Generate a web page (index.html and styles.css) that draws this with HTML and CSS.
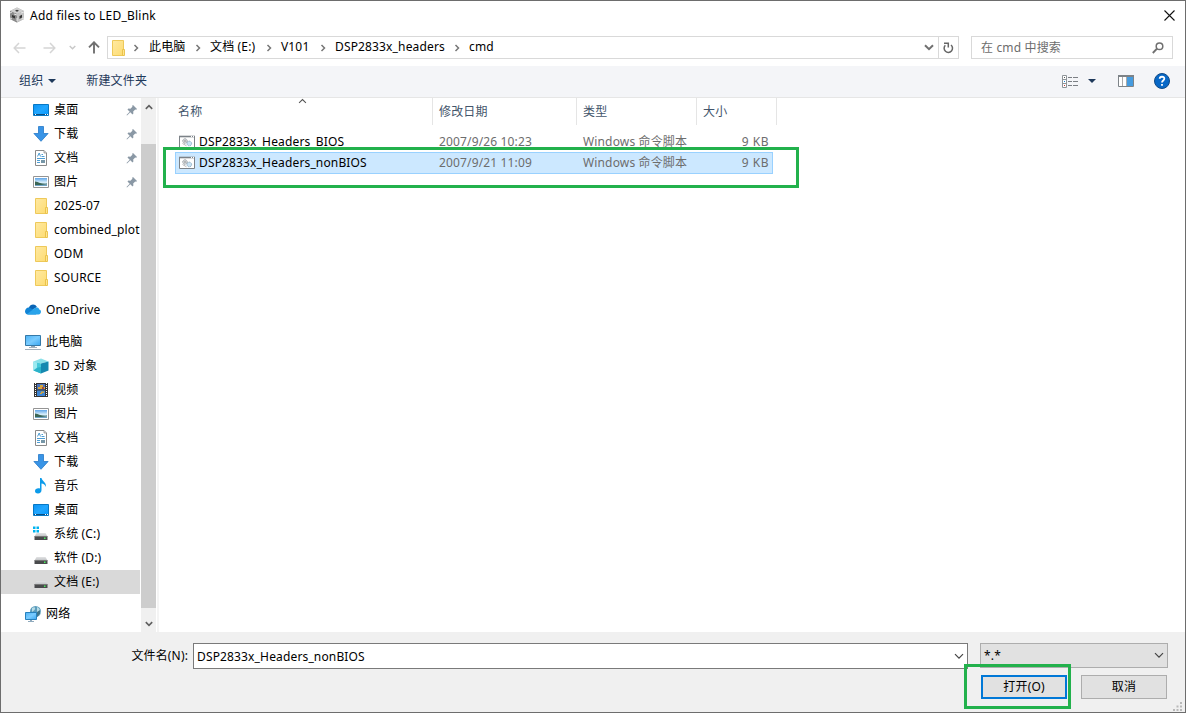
FILE: index.html
```html
<!DOCTYPE html>
<html lang="zh-CN">
<head>
<meta charset="utf-8">
<title>Add files to LED_Blink</title>
<link rel="stylesheet" href="styles.css">
</head>
<body>
<svg class="defs" width="0" height="0">
  <defs>
    <linearGradient id="gFolder" x1="0" y1="0" x2="1" y2="1"><stop offset="0" stop-color="#ffe9a2"/><stop offset="1" stop-color="#fddc72"/></linearGradient>
    <linearGradient id="gDesk" x1="0" y1="0" x2="1" y2="1"><stop offset="0" stop-color="#0a93f5"/><stop offset=".5" stop-color="#22a7ff"/><stop offset="1" stop-color="#0796fb"/></linearGradient>
    <linearGradient id="gScreen" x1="0" y1="0" x2="1" y2="1"><stop offset="0" stop-color="#4db2f4"/><stop offset=".5" stop-color="#7accff"/><stop offset="1" stop-color="#39a6f0"/></linearGradient>
    <linearGradient id="gSky" x1="0" y1="0" x2="0" y2="1"><stop offset="0" stop-color="#5fa5e8"/><stop offset=".55" stop-color="#d9effb"/><stop offset="1" stop-color="#5f98bd"/></linearGradient>
    <linearGradient id="gDrive" x1="0" y1="0" x2="0" y2="1"><stop offset="0" stop-color="#e2e3e4"/><stop offset="1" stop-color="#bfc1c4"/></linearGradient>
  </defs>
  <symbol id="folder" viewBox="0 0 16 16"><path d="M2.500.5h11v15h-11z" fill="url(#gFolder)" stroke="#eec95a"/><path d="M12.500 9.500h2v6h-2z" fill="#ffe58f" stroke="#e9bf45" stroke-width=".9"/></symbol>
  <symbol id="desktop" viewBox="0 0 16 16"><path d="M.5 2.500h15v11H.5z" fill="url(#gDesk)" stroke="#0878c4"/><path d="M1 12.500h14" stroke="#0b4f83"/><path d="M2 12.500h1m9 0h1m1 0h1" stroke="#fff"/></symbol>
  <symbol id="download" viewBox="0 0 16 16"><path d="M5.500.5h5v7h4.600L8 15.300.9 7.500h4.600z" fill="#3994e6" stroke="#2479c8" stroke-width=".8"/></symbol>
  <symbol id="doc" viewBox="0 0 16 16"><path d="M2.500.5h8.500l2.500 2.500v12.500h-11z" fill="#fff" stroke="#8a8a8a"/><path d="M11 .5V3h2.500" fill="#ddd" stroke="#8a8a8a" stroke-width=".7"/><path d="M4.500 6.500 6.200 3l1.300 3.500M8.500 4.500H10M8.500 6.500h3M4 8.500h8M4 10.500h3M4 12.500h3" stroke="#3a92ce" stroke-width=".9" fill="none"/><path d="M8 10h4v3H8z" fill="#7797a8"/></symbol>
  <symbol id="picture" viewBox="0 0 16 16"><path d="M.5 2.500h15v11H.5z" fill="#fff" stroke="#949494"/><path d="M2 4h12v8H2z" fill="url(#gSky)"/><path d="M2 7.500c2 0 3 1 5 1.500s4 1 7 .5v.7L8 11H2z" fill="#3b6655"/></symbol>
  <symbol id="pin" viewBox="0 0 12 12"><path d="M7 1l4 4-.8.8-1-.2-2 2 .2 2-.9.9-2.200-2.200L1 11.500l-.5-.5 3.200-3.300-2.200-2.200.9-.9 2 .2 2-2-.2-1z" fill="#8a98a5"/></symbol>
  <symbol id="cloud" viewBox="0 0 16 16"><path d="M4 5.500C5 2 10 1 12 5l-5 3-5 1z" fill="#0a64b5"/><path d="M0 9.500C0 7 2 5 4.500 5.500L12 10l-1 2.500H3C1 12.500 0 11 0 9.500z" fill="#1184d6"/><path d="M8 7.500C9.500 5 14 4.500 14.200 7.500 16.800 8 16.500 12.500 13.500 12.500H3l-1-.6z" fill="#29a3ea"/></symbol>
  <symbol id="pc" viewBox="0 0 16 16"><path d="M.5 1.500h15v10H.5z" fill="url(#gScreen)" stroke="#3579a8"/><path d="M6 12h4v1H6z" fill="#8fa5b5"/><path d="M4 13.500h8M0 15.500h16" stroke="#8b9dab" stroke-width=".8"/></symbol>
  <symbol id="cube" viewBox="0 0 16 16"><path d="M.5 3.500 8 .5l7.500 3L8 5.500z" fill="#8be1e9"/><path d="M.5 3.500 8 5.500v10L.5 12.500z" fill="#45c9da"/><path d="M.5 3.500 4 4.400V9.500L.5 12.500z" fill="#9ceaf0"/><path d="M8 5.500l7.500-2v9L8 15.500z" fill="#1689b0"/><path d="M.5 12.500 5 9.500l3-.5v6.500z" fill="#2cb2c9"/></symbol>
  <symbol id="film" viewBox="0 0 16 16"><path d="M1 1h14v14H1z" fill="#343434"/><path d="M2.500 1v14M13.500 1v14" stroke="#fff" stroke-dasharray="1 1"/><path d="M4 2h8v5.500H4z" fill="#4b75bc"/><path d="M4 8.500h8V14H4z" fill="#3e84d2"/><path d="M5 5h2V3h3v2h2v2H5zM7 11h1V9.500h3V11H9v1H7z" fill="#d3a53d"/><path d="M9 5h2v2H9z" fill="#a64943"/></symbol>
  <symbol id="music" viewBox="0 0 16 16"><path d="M7 0h1.500c.3 3 5.500 4.500 4.200 9-.7-2-2-3.300-4.200-3.400V12c0 2-1.300 3.500-3.500 3.500S2 14.500 2 13c0-2 2.500-3.200 5-2.400z" fill="#0c9bea"/></symbol>
  <symbol id="drive" viewBox="0 0 16 16"><path d="M3.500 7h9l2 3.500h-13z" fill="url(#gDrive)"/><path d="M1.500 10h13v4h-13z" fill="#4a4b4d"/><path d="M2 10.500h12" stroke="#777"/><path d="M11 11.500h1.500V13H11z" fill="#47f05c"/></symbol>
  <symbol id="sysdrive" viewBox="0 0 16 16"><use href="#drive" width="16" height="16"/><path d="M0 .5h2.500V3H0zM3.500.5H6V3H3.500zM0 4h2.500v2.500H0zM3.500 4H6v2.500H3.500z" fill="#00b4f0"/></symbol>
  <symbol id="network" viewBox="0 0 16 16"><circle cx="10.500" cy="5.500" r="5.500" fill="#5b9cbc"/><path d="M7 2c3-2 4 0 2.500 2L7 6zM12 1c3 1 4 5 3 8l-3-3z" fill="#b7dbe5"/><path d="M12 6l3-2v4l-3 3z" fill="#427589"/><path d="M.5 6.500h11v7H.5z" fill="url(#gScreen)" stroke="#2681bd"/><path d="M3 15.500h6M5 14.500h2" stroke="#8faabd"/></symbol>
  <symbol id="script" viewBox="0 0 16 14"><path d="M.5 1.500h15v11H.5z" fill="#fff" stroke="#7c8288"/><path d="M0 1.500h16" stroke="#7c8288" stroke-width="1.600"/><path d="M12 1.500h1m1 0h1" stroke="#fff"/><circle cx="6" cy="6" r="2.200" fill="#e2e4e6" stroke="#7f868c" stroke-dasharray="1 .6"/><circle cx="6" cy="6" r=".7" fill="#666"/><circle cx="10.300" cy="8.500" r="2.300" fill="#c9e3f3" stroke="#7fa3bd" stroke-dasharray="1 .6"/><path d="M3.500 8.500l4 2.300" stroke="#999" stroke-width=".7"/></symbol>
  <symbol id="crumb" viewBox="0 0 6 8"><path d="M1.500 1 4.500 4 1.500 7" fill="none" stroke="#777" stroke-width="1.500"/></symbol>
  <symbol id="chev" viewBox="0 0 10 7"><path d="M1 1.200 5 5.200 9 1.200" fill="none" stroke="currentColor" stroke-width="var(--w,1.200)"/></symbol>
</svg>

<div class="window">
  <header class="titlebar">
    <svg class="app-icon" width="16" height="16" viewBox="0 0 16 16"><path d="M1 4 8 .5 15 4v8l-7 3.500L1 12z" fill="#a3a3a3"/><path d="M1 4 8 .5 15 4 8 7z" fill="#d0d0d0"/><path d="M1 4l7 3v8.500L1 12z" fill="#8b8b8b"/><path d="M8 7l7-3v8l-7 3.500z" fill="#c4c4c4"/><path d="M6 3.800l2-1 2 1-2 .9zM3 8l3 1v2.500l-3-1.300zM10.500 9l2.500-1.200v2.700L10.500 12z" fill="#363636"/><path d="M1 6l2-1M5 7l3 1M1 11l2 1M8 14v-3M12 6l3-1M13 12l2-1" stroke="#e5e5e5"/></svg>
    <h1 class="title">Add files to LED_Blink</h1>
    <svg class="close" width="11" height="11" viewBox="0 0 11 11"><path d="M.5.5l10 10M10.500.5l-10 10" stroke="#111" stroke-width="1.100"/></svg>
  </header>

  <div class="nav">
    <div class="nav-buttons">
      <svg width="13" height="12" viewBox="0 0 13 12"><path d="M6 1 1.200 6 6 11M1.200 6H12.500" fill="none" stroke="#d5d5d5" stroke-width="1.500"/></svg>
      <svg width="13" height="12" viewBox="0 0 13 12"><path d="M7 1l4.800 5L7 11M11.800 6H.5" fill="none" stroke="#d5d5d5" stroke-width="1.500"/></svg>
      <svg class="recent" width="7" height="5"><use href="#chev"/></svg>
      <svg width="12" height="13" viewBox="0 0 12 13"><path d="M1 6.300 6 1.300l5 5M6 1.500V12.500" fill="none" stroke="#717171" stroke-width="1.900"/></svg>
    </div>
    <div class="address">
      <svg class="folder" width="16" height="16"><use href="#folder"/></svg>
      <svg class="sep s1" width="6" height="8"><use href="#crumb"/></svg><span class="crumb c1">此电脑</span>
      <svg class="sep" width="6" height="8"><use href="#crumb"/></svg><span class="crumb c2">文档 (E:)</span>
      <svg class="sep" width="6" height="8"><use href="#crumb"/></svg><span class="crumb c3">V101</span>
      <svg class="sep" width="6" height="8"><use href="#crumb"/></svg><span class="crumb c4">DSP2833x_headers</span>
      <svg class="sep" width="6" height="8"><use href="#crumb"/></svg><span class="crumb">cmd</span>
      <svg class="drop bold" width="10" height="7"><use href="#chev"/></svg>
      <span class="refresh"><svg width="11" height="12" viewBox="0 0 11 12"><path d="M2.300 3.300A4.200 4.200 0 1 0 8 3" fill="none" stroke="#666" stroke-width="1.500"/><path d="M1 1.200h4.300V5.500" fill="none" stroke="#666" stroke-width="1.500"/></svg></span>
    </div>
    <div class="search"><span>在 cmd 中搜索</span><svg width="12" height="12" viewBox="0 0 12 12"><circle cx="7.500" cy="4.300" r="3.300" fill="none" stroke="#707070" stroke-width="1.500"/><path d="M5 6.700.8 11" stroke="#707070" stroke-width="1.900"/></svg></div>
  </div>

  <div class="toolbar">
    <span>组织</span><i class="caret"></i><span class="newfolder">新建文件夹</span>
    <svg class="view" width="17" height="13" viewBox="0 0 17 13"><path d="M.5.5h4v12h-4zM.5 4.500h4M.5 8.500h4" fill="#fff" stroke="#8e9499"/><path d="M2 2h1v1H2z" fill="#555"/><path d="M2 6h1v1H2z" fill="#1787dc"/><path d="M2 10h1v1H2z" fill="#c33"/><path d="M6 2.500h4m1 0h5M6 6.500h4m1 0h5M6 10.500h4m1 0h5" stroke="#7b7f84"/></svg>
    <i class="caret"></i>
    <svg class="pane" width="16" height="12" viewBox="0 0 16 12"><path d="M.5.5h15v11H.5z" fill="#fff" stroke="#7d8388"/><path d="M0 1h16" stroke="#7d8388" stroke-width="2"/><path d="M9 2h6v9H9z" fill="#459bdf"/><path d="M4.500 2v9M8.500 2v9" stroke="#aaa"/></svg>
    <svg class="help" width="16" height="16" viewBox="0 0 16 16"><circle cx="8" cy="8" r="7.500" fill="#0868c7" stroke="#114a86"/><path d="M5.700 5.700C5.900 3 10.500 3.200 10.300 5.800 10.200 7.500 8 7.500 8 9.500M8 11v1.800" fill="none" stroke="#fff" stroke-width="1.800"/></svg>
  </div>

  <main class="body">
    <nav class="tree">
      <div class="item"><svg><use href="#desktop"/></svg><span>桌面</span><svg class="pin"><use href="#pin"/></svg></div>
      <div class="item"><svg><use href="#download"/></svg><span>下载</span><svg class="pin"><use href="#pin"/></svg></div>
      <div class="item"><svg><use href="#doc"/></svg><span>文档</span><svg class="pin"><use href="#pin"/></svg></div>
      <div class="item"><svg><use href="#picture"/></svg><span>图片</span><svg class="pin"><use href="#pin"/></svg></div>
      <div class="item"><svg><use href="#folder"/></svg><span>2025-07</span></div>
      <div class="item"><svg><use href="#folder"/></svg><span>combined_plot</span></div>
      <div class="item"><svg><use href="#folder"/></svg><span>ODM</span></div>
      <div class="item"><svg><use href="#folder"/></svg><span>SOURCE</span></div>
      <div class="item root"><svg><use href="#cloud"/></svg><span>OneDrive</span></div>
      <div class="item root"><svg><use href="#pc"/></svg><span>此电脑</span></div>
      <div class="item"><svg><use href="#cube"/></svg><span>3D 对象</span></div>
      <div class="item"><svg><use href="#film"/></svg><span>视频</span></div>
      <div class="item"><svg><use href="#picture"/></svg><span>图片</span></div>
      <div class="item"><svg><use href="#doc"/></svg><span>文档</span></div>
      <div class="item"><svg><use href="#download"/></svg><span>下载</span></div>
      <div class="item"><svg><use href="#music"/></svg><span>音乐</span></div>
      <div class="item"><svg><use href="#desktop"/></svg><span>桌面</span></div>
      <div class="item"><svg><use href="#sysdrive"/></svg><span>系统 (C:)</span></div>
      <div class="item"><svg><use href="#drive"/></svg><span>软件 (D:)</span></div>
      <div class="item active"><svg><use href="#drive"/></svg><span>文档 (E:)</span></div>
      <div class="item root"><svg><use href="#network"/></svg><span>网络</span></div>
    </nav>
    <div class="scrollbar">
      <span class="sb-btn up"><svg class="bold" width="8" height="6"><use href="#chev"/></svg></span>
      <span class="thumb"></span>
      <span class="sb-btn"><svg class="bold" width="8" height="6"><use href="#chev"/></svg></span>
    </div>
    <section class="files">
      <div class="row head"><span>名称<svg class="sort" width="9" height="6"><use href="#chev"/></svg></span><span>修改日期</span><span>类型</span><span>大小</span></div>
      <div class="row file"><span class="name"><svg width="16" height="14"><use href="#script"/></svg>DSP2833x_Headers_BIOS</span><span>2007/9/26 10:23</span><span>Windows 命令脚本</span><span class="size">9 KB</span></div>
      <div class="row file selected"><span class="name"><svg width="16" height="14"><use href="#script"/></svg>DSP2833x_Headers_nonBIOS</span><span>2007/9/21 11:09</span><span>Windows 命令脚本</span><span class="size">9 KB</span></div>
    </section>
  </main>

  <footer class="footer">
    <div class="fields">
      <label class="label">文件名(N):</label>
      <div class="combo filename"><span>DSP2833x_Headers_nonBIOS</span><svg width="10" height="7"><use href="#chev"/></svg></div>
      <div class="combo filter"><span>*.*</span><svg width="10" height="7"><use href="#chev"/></svg></div>
    </div>
    <div class="actions"><span class="btn primary">打开(O)</span><span class="btn">取消</span></div>
    <svg class="grip" width="9" height="9" viewBox="0 0 9 9"><path d="M7 0h2v2H7zM7 3.500h2v2H7zM3.500 3.500h2v2h-2zM7 7h2v2H7zM3.500 7h2v2h-2zM0 7h2v2H0z" fill="#b9b9b9"/></svg>
  </footer>
  <div class="mark mark-file"></div>
  <div class="mark mark-open"></div>
</div>
</body>
</html>
```
FILE: styles.css
```css
* { box-sizing: border-box; }
body {
  margin: 0;
  font: 12px/18px "Noto Sans", "Noto Sans CJK SC", sans-serif;
  letter-spacing: 0.15px;
  color: #000;
}
svg { display: block; flex: none; }
.defs { position: absolute; }
.window {
  position: relative;
  width: 1186px;
  height: 713px;
  display: flex;
  flex-direction: column;
  border: 1px solid #6d6d6d;
  background: #fff;
  overflow: hidden;
  white-space: nowrap;
}

.titlebar { display: flex; align-items: center; height: 29px; padding: 0 10px 0 8px; }
.title { margin: 0 0 0 5px; font-size: 12px; font-weight: 400; letter-spacing: 0.22px; }
.app-icon { margin-bottom: 1px; }
.close { margin-left: auto; }

.nav { display: flex; height: 36px; padding: 6px 12px 7px 0; }
.nav-buttons { display: flex; align-items: center; width: 106px; padding-left: 12px; gap: 17px; }
.nav-buttons .recent { color: #c8c8c8; --w: 2; margin: 0 -5px 0 -4px; }
.address { display: flex; align-items: center; width: 852px; border: 1px solid #d9d9d9; }
.address .folder { margin-left: 2px; }
.sep { margin: 0 9px 0 9px; }
.address .s1 { margin: 0 10px 0 7px; }
.crumb { line-height: 20px; margin-top: -1px; }
.c1 { width: 37px; }
.c2 { width: 47px; }
.c3 { width: 30px; }
.c4 { width: 110px; }
.bold { --w: 2; color: #606060; }
.drop { margin-left: auto; margin-right: 4px; color: #707070; }
.refresh { display: flex; align-items: center; justify-content: center; width: 20px; height: 21px; border-left: 1px solid #d9d9d9; }
.search { display: flex; align-items: center; justify-content: space-between; width: 202px; margin-left: auto; padding: 0 8px 0 9px; border: 1px solid #d9d9d9; color: #6d6d6d; }

.toolbar { display: flex; align-items: center; height: 32px; padding: 0 15px 1px 18px; background: #f4f5f8; border-bottom: 1px solid #e6e6e6; color: #1e395b; }
.caret { width: 0; height: 0; margin-left: 5px; border: 4px solid transparent; border-top-color: #1e395b; border-bottom: 0; }
.newfolder { margin-left: 30px; }
.view { margin-left: auto; margin-right: 4px; }
.pane { margin: 0 20px 0 22px; }

.body { display: flex; height: 534px; }
.tree { width: 139px; overflow: hidden; }
.item { display: flex; align-items: center; height: 24px; padding-left: 32px; }
.item > svg { width: 16px; height: 16px; margin-right: 5px; }
.item > span { width: 76px; line-height: 22px; }
.item > .pin { width: 12px; height: 12px; margin: 0 0 0 -4px; }
.item.root { margin-top: 8px; padding-left: 24px; }
.item.active { background: #d9d9d9; }
.scrollbar { display: flex; flex-direction: column; width: 18px; margin-left: 1px; background: linear-gradient(90deg, #f0f0f0 15px, #fff 15px, #fff 16px, #f4f4f4 16px); }
.sb-btn { display: flex; align-items: center; justify-content: center; width: 15px; height: 24px; padding-top: 8px; }
.sb-btn.up { height: 46px; align-items: flex-start; padding-top: 6px; }
.up svg { transform: rotate(180deg); }
.thumb { flex: 1; width: 15px; background: #cdcdcd; }

.files { flex: 1; padding-left: 16px; }
.row { display: grid; grid-template-columns: 257px 144px 120px 75px; width: 598px; }
.head { width: 602px; height: 27px; grid-template-columns: 258px 144px 120px 80px; color: #43556b; }
.head span { position: relative; padding-left: 6px; line-height: 27px; border-right: 1px solid #e5e5e5; }
.head span:first-child { padding-left: 3px; }
.sort { position: absolute; left: 123px; top: 0; color: #555; transform: rotate(180deg); }
.file { height: 22px; line-height: 20px; border: 1px solid transparent; color: #6d6d6d; }
.file > span { padding-left: 6px; }
.head + .file { margin-top: 5px; line-height: 22px; }
.file .name { display: flex; align-items: center; gap: 4px; padding-left: 3px; color: #000; }
.file .name svg { margin-top: -1px; }
.file .size { padding: 0 3px 0 0; text-align: right; letter-spacing: 0.5px; }
.file.selected { background: #cce8ff; border-color: #99d1ff; }

.footer { position: relative; flex: 1; padding-top: 11px; background: #f0f0f0; }
.fields { display: flex; height: 26px; }
.label { width: 192px; padding-right: 5px; text-align: right; line-height: 26px; }
.combo { display: flex; align-items: center; justify-content: space-between; padding: 0 3px; border: 1px solid #7a7a7a; color: #444; }
.combo span { color: #000; }
.filename { width: 775px; background: #fff; }
.filename span { padding-top: 2px; }
.filter { width: 188px; height: 25px; margin-left: 12px; background: #e1e1e1; border-color: #adadad; }
.actions { display: flex; gap: 14px; margin: 6px 0 0 980px; }
.btn { width: 86px; height: 24px; line-height: 22px; text-align: center; background: #e1e1e1; border: 1px solid #adadad; }
.btn.primary { line-height: 20px; border: 2px solid #0078d7; }
.grip { position: absolute; right: 3px; bottom: 1px; }

.mark { position: absolute; border: 3px solid #22b14c; }
.mark-file { left: 162px; top: 146px; width: 636px; height: 41px; }
.mark-open { left: 963px; top: 663px; width: 107px; height: 45px; }
```
